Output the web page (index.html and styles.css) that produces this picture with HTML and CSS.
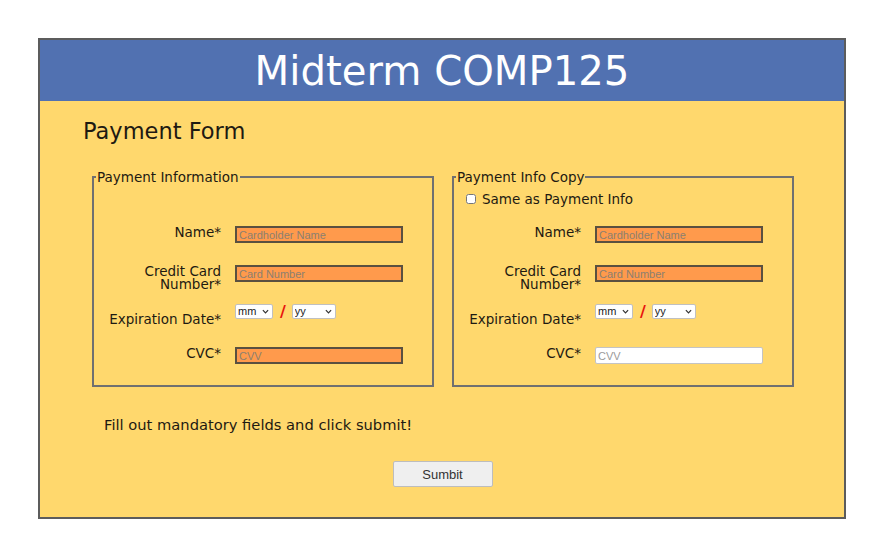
FILE: index.html
```html
<!DOCTYPE html>
<html lang="en">
<head>
    <meta charset="UTF-8">
    <meta name="viewport" content="width=device-width, initial-scale=1.0">
    <title>Midterm COMP125</title>
    <link rel="stylesheet" href="styles.css">
</head>
<body>

<div class="container">
    <div class="header">Midterm COMP125</div>

    <h2 class="form-title">Payment Form</h2>

    <div class="sets">
        <fieldset>
            <legend>Payment Information</legend>
            <div class="check-row"></div>
            <div class="row row-name">
                <label for="name1">Name*</label>
                <input type="text" id="name1" class="field" placeholder="Cardholder Name">
            </div>
            <div class="row row-card">
                <label for="card1">Credit Card Number*</label>
                <input type="text" id="card1" class="field" placeholder="Card Number">
            </div>
            <div class="row row-date">
                <label>Expiration Date*</label>
                <div class="date">
                    <span class="pick mm">
                        <select><option>mm</option></select>
                        <svg viewBox="0 0 8 5"><path d="M1 1 L4 4 L7 1" /></svg>
                    </span>
                    <span class="slash">/</span>
                    <span class="pick yy">
                        <select><option>yy</option></select>
                        <svg viewBox="0 0 8 5"><path d="M1 1 L4 4 L7 1" /></svg>
                    </span>
                </div>
            </div>
            <div class="row row-cvc">
                <label for="cvc1">CVC*</label>
                <input type="text" id="cvc1" class="field" placeholder="CVV">
            </div>
        </fieldset>

        <fieldset>
            <legend>Payment Info Copy</legend>
            <div class="check-row">
                <input type="checkbox" id="same">
                <label for="same">Same as Payment Info</label>
            </div>
            <div class="row row-name">
                <label for="name2">Name*</label>
                <input type="text" id="name2" class="field" placeholder="Cardholder Name">
            </div>
            <div class="row row-card">
                <label for="card2">Credit Card Number*</label>
                <input type="text" id="card2" class="field" placeholder="Card Number">
            </div>
            <div class="row row-date">
                <label>Expiration Date*</label>
                <div class="date">
                    <span class="pick mm">
                        <select><option>mm</option></select>
                        <svg viewBox="0 0 8 5"><path d="M1 1 L4 4 L7 1" /></svg>
                    </span>
                    <span class="slash">/</span>
                    <span class="pick yy">
                        <select><option>yy</option></select>
                        <svg viewBox="0 0 8 5"><path d="M1 1 L4 4 L7 1" /></svg>
                    </span>
                </div>
            </div>
            <div class="row row-cvc">
                <label for="cvc2">CVC*</label>
                <input type="text" id="cvc2" class="field plain" placeholder="CVV">
            </div>
        </fieldset>
    </div>

    <p class="note">Fill out mandatory fields and click submit!</p>

    <div class="actions">
        <button type="button" class="submit-btn">Sumbit</button>
    </div>
</div>

</body>
</html>
```

FILE: styles.css
```css
body {
    margin: 0;
    background: #ffffff;
    font-family: "DejaVu Sans", Verdana, sans-serif;
    color: #1e1a12;
}

.container {
    width: 808px;
    height: 481px;
    margin: 38px 0 0 38px;
    border: 2px solid #5c5c5c;
    background: #ffd86d;
    box-sizing: border-box;
}

.header {
    height: 61px;
    background: #5171b1;
    color: #ffffff;
    font-size: 40.2px;
    display: flex;
    align-items: center;
    justify-content: center;
}

.form-title {
    margin: 17px 0 0 43px;
    font-size: 22.5px;
    font-weight: normal;
    line-height: 26px;
}

.sets {
    display: flex;
    gap: 18px;
    margin: 25px 0 0 52px;
}

fieldset {
    width: 342px;
    margin: 0;
    padding: 0 0 21px 0;
    border: 2px solid #707070;
    box-sizing: border-box;
}

legend {
    margin-left: 2px;
    padding: 0 1px;
    font-size: 13.5px;
    line-height: 16px;
}

.check-row {
    height: 16px;
    margin: 6px 0 0 12px;
    display: flex;
    align-items: center;
    gap: 6px;
    font-size: 13.5px;
}

.check-row input {
    width: 10px;
    height: 10px;
    margin: 0;
}

.row {
    display: flex;
    align-items: flex-start;
    gap: 14px;
}

.row label {
    width: 127px;
    text-align: right;
    font-size: 13.5px;
    line-height: 13px;
}

.row-name { margin-top: 19px; }
.row-card { margin-top: 22px; }
.row-date { margin-top: 13px; }
.row-cvc { margin-top: 21px; }

.row-date label { padding-top: 9px; }

.field {
    width: 168px;
    height: 17px;
    margin: 0;
    padding: 0 2px;
    border: 2px solid #5a5040;
    background: #ff9a4c;
    font-family: "Liberation Sans", Arial, sans-serif;
    font-size: 11px;
    box-sizing: border-box;
}

.field::placeholder {
    color: #8c8070;
}

.field.plain {
    background: #ffffff;
    border: 1px solid #c4c4c4;
    border-radius: 2px;
}

.field.plain::placeholder {
    color: #9a9a9a;
}

.date {
    display: flex;
    align-items: flex-start;
    height: 15px;
}

.pick {
    position: relative;
    display: block;
    height: 15px;
}

.pick select {
    appearance: none;
    -webkit-appearance: none;
    display: block;
    width: 100%;
    height: 15px;
    margin: 0;
    padding: 0 0 0 2px;
    border: 1px solid #c0c0c0;
    border-radius: 2px;
    background: #ffffff;
    color: #222222;
    font-family: "Liberation Sans", Arial, sans-serif;
    font-size: 11px;
    line-height: 13px;
    box-sizing: border-box;
}

.pick svg {
    position: absolute;
    right: 4px;
    top: 5px;
    width: 7px;
    height: 5px;
    fill: none;
    stroke: #333333;
    stroke-width: 1.4;
    pointer-events: none;
}

.mm { width: 38px; }
.yy { width: 44px; }

.slash {
    margin: 0 6px 0 7px;
    color: #e8120c;
    font-size: 16px;
    font-weight: bold;
    line-height: 15px;
}

.note {
    margin: 29px 0 0 64px;
    font-size: 14.7px;
    line-height: 17px;
}

.actions {
    display: flex;
    justify-content: center;
    margin-top: 28px;
    padding-left: 1px;
}

.submit-btn {
    width: 100px;
    height: 26px;
    border: 1px solid #bdbdbd;
    border-radius: 2px;
    background: #efefef;
    color: #333333;
    font-family: "Liberation Sans", Arial, sans-serif;
    font-size: 13px;
    cursor: pointer;
}
```
